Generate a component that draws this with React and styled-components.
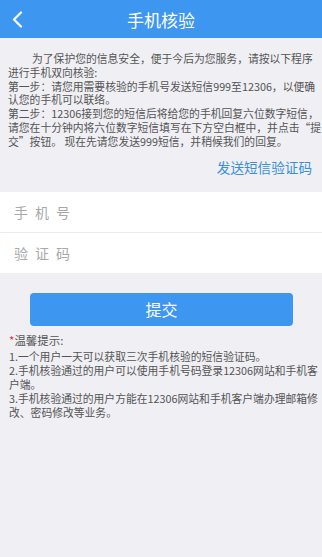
import React from 'react';
import styled, { createGlobalStyle } from 'styled-components';

const GlobalStyle = createGlobalStyle`
  html, body {
    margin: 0;
    padding: 0;
    background: #efeff4;
  }
  body {
    font-family: "Noto Sans CJK SC", "Noto Sans", sans-serif;
  }
`;

const Page = styled.div`
  width: 322px;
  min-height: 557px;
  background: #efeff4;
  display: flex;
  flex-direction: column;
`;

const Header = styled.div`
  height: 38px;
  background: #3d96ef;
  display: flex;
  align-items: center;
  justify-content: center;
  position: relative;
  color: #fff;
  font-size: 17px;
`;

const Back = styled.div`
  position: absolute;
  left: 11px;
  top: 11px;
  width: 14px;
  height: 17px;
  display: flex;
`;

const Intro = styled.div`
  padding: 14px 8px 0 8px;
  font-size: 10.8px;
  line-height: 13.8px;
  color: #555;
`;

const Line = styled.div`
  white-space: nowrap;
  padding-left: ${(p) => (p.$indent ? '24px' : '0')};
`;

const LinkRow = styled.div`
  display: flex;
  justify-content: flex-end;
  padding: 8px 10px 0 0;
  height: 20px;
  line-height: 20px;
  font-size: 13.6px;
  color: #3b8fd9;
`;

const Fields = styled.div`
  margin-top: 15px;
  display: flex;
  flex-direction: column;
  gap: 1px;
  background: #ececf0;
`;

const Field = styled.div`
  height: 40px;
  background: #fff;
  display: flex;
  align-items: center;
  padding-left: 14px;
  font-size: 14px;
  letter-spacing: 7px;
  color: #a8a8a8;
`;

const Submit = styled.button`
  margin: 20px 0 0 30px;
  width: 263px;
  height: 33px;
  border: none;
  border-radius: 4px;
  background: #3d96ef;
  color: #fff;
  font-family: inherit;
  font-size: 16px;
  padding: 0;
`;

const Tips = styled.div`
  padding: 8px 8px 0 9px;
  font-size: 10.8px;
  line-height: 13.8px;
  color: #555;
`;

const TipTitle = styled.div`
  font-size: 11.5px;
  margin-bottom: 3px;
  color: #555;
  span {
    color: #e0383e;
  }
`;

const intro = [
  '为了保护您的信息安全，便于今后为您服务，请按以下程序',
  '进行手机双向核验:',
  '第一步：请您用需要核验的手机号发送短信999至12306，以便确',
  '认您的手机可以联络。',
  '第二步：12306接到您的短信后将给您的手机回复六位数字短信，',
  '请您在十分钟内将六位数字短信填写在下方空白框中，并点击“提',
  '交”按钮。 现在先请您发送999短信，并稍候我们的回复。',
];

const tips = [
  '1.一个用户一天可以获取三次手机核验的短信验证码。',
  '2.手机核验通过的用户可以使用手机号码登录12306网站和手机客',
  '户端。',
  '3.手机核验通过的用户方能在12306网站和手机客户端办理邮箱修',
  '改、密码修改等业务。',
];

const App = () => (
  <Page>
    <GlobalStyle />
    <Header>
      <Back>
        <svg width="14" height="17" viewBox="0 0 14 17">
          <path d="M10 1.5 L3 8.5 L10 15.5" fill="none" stroke="#fff" strokeWidth="2.2" strokeLinecap="round" strokeLinejoin="round" />
        </svg>
      </Back>
      手机核验
    </Header>
    <Intro>
      {intro.map((t, i) => (
        <Line key={i} $indent={i === 0}>
          {t}
        </Line>
      ))}
    </Intro>
    <LinkRow>发送短信验证码</LinkRow>
    <Fields>
      <Field>手机号</Field>
      <Field>验证码</Field>
    </Fields>
    <Submit type="button">提交</Submit>
    <Tips>
      <TipTitle>
        <span>*</span>温馨提示:
      </TipTitle>
      {tips.map((t, i) => (
        <Line key={i}>{t}</Line>
      ))}
    </Tips>
  </Page>
);

export default App;
